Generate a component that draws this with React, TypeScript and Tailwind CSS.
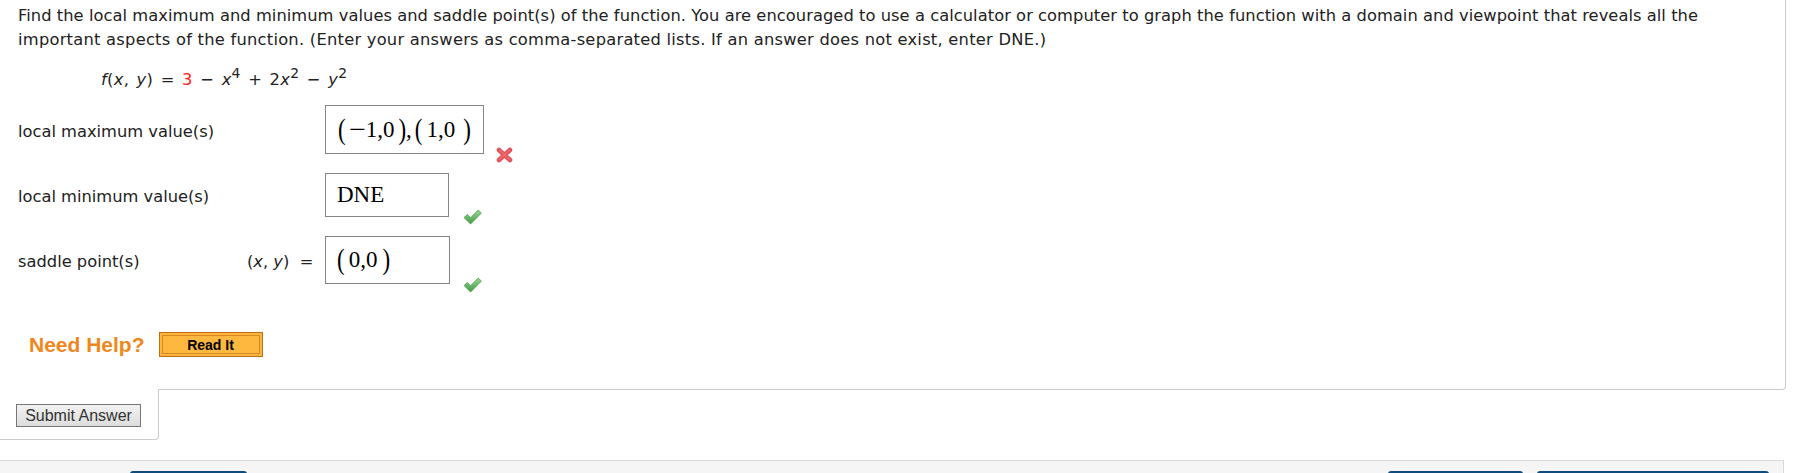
import React from "react";

function Check() {
  return (
    <svg width="19" height="16" viewBox="0 0 19 16" className="block">
      <defs>
        <linearGradient id="gck" x1="0" y1="0" x2="0" y2="1">
          <stop offset="0" stopColor="#9ad894" />
          <stop offset="1" stopColor="#3f9a42" />
        </linearGradient>
      </defs>
      <path d="M1 8.6 L4.3 5.6 L7.6 8.8 L15.2 1 L18.4 4.1 L7.6 15 Z" fill="url(#gck)" stroke="#4f9e4d" strokeWidth="0.8" strokeLinejoin="round" />
    </svg>
  );
}

function Cross() {
  return (
    <svg width="17" height="16" viewBox="0 0 17 16" className="block">
      <g strokeLinecap="round">
        <path d="M3 3 L14 13 M14 3 L3 13" stroke="#e44e55" strokeWidth="4.6" />
        <path d="M3.4 3 L13.6 12.4 M13.6 3 L3.4 12.4" stroke="#f27a80" strokeWidth="1.6" opacity="0.7" />
      </g>
    </svg>
  );
}

const Paren = ({ c }: { c: string }) => (
  <span className="inline-block scale-y-125">{c}</span>
);

const Minus = () => <span className="inline-block scale-x-[1.3] mx-[2px]">−</span>;

export default function App() {
  return (
    <div className="w-[1794px] h-[473px] overflow-hidden bg-white font-['DejaVu_Sans',Verdana,sans-serif] text-[16.3px] leading-[24px] text-[#222]">
      <div className="mr-[8px] border-r border-b border-[#cccccc] rounded-br-[4px] pb-[32px]">
        <p className="pl-[18px] pt-[4px] whitespace-nowrap tracking-[0.05px]">
          Find the local maximum and minimum values and saddle point(s) of the function. You are encouraged to use a calculator or computer to graph the function with a domain and viewpoint that reveals all the
          <br />
          <span className="tracking-[0.25px]">
            important aspects of the function. (Enter your answers as comma-separated lists. If an answer does not exist, enter DNE.)
          </span>
        </p>
        <div className="pl-[101px] mt-[16px] whitespace-nowrap [word-spacing:2px] tracking-[0.3px]">
          <i>f</i>(<i>x</i>, <i>y</i>) = <span className="text-[#ff1a1a]">3</span> − <i>x</i>
          <sup className="text-[85%]">4</sup> + 2<i>x</i>
          <sup className="text-[85%]">2</sup> − <i>y</i>
          <sup className="text-[85%]">2</sup>
        </div>

        {/* row 1 */}
        <div className="flex items-baseline mt-[13px] pl-[18px]">
          <div className="w-[229px]">local maximum value(s)</div>
          <div className="w-[78px]"></div>
          <div className="h-[49px] w-[159px] border border-[#858585] pl-[12px] leading-[47px] font-['Liberation_Serif',serif] text-[23px] text-black whitespace-nowrap">
            <Paren c="(" />
            <span className="ml-[3px]"><Minus /></span>
            <span>1,0</span>
            <span className="ml-[4px]"><Paren c=")" /></span>
            <span>,</span>
            <span className="ml-[3px]"><Paren c="(" /></span>
            <span className="ml-[4px]">1,0</span>
            <span className="ml-[8px]"><Paren c=")" /></span>
          </div>
          <div className="self-end translate-y-[9px] ml-[12px]">
            <Cross />
          </div>
        </div>

        {/* row 2 */}
        <div className="flex items-baseline mt-[19px] pl-[18px]">
          <div className="w-[229px]">local minimum value(s)</div>
          <div className="w-[78px]"></div>
          <div className="h-[44px] w-[124px] border border-[#858585] pl-[11px] leading-[42px] font-['Liberation_Serif',serif] text-[23px] text-black">
            DNE
          </div>
          <div className="self-end translate-y-[8px] ml-[14px]">
            <Check />
          </div>
        </div>

        {/* row 3 */}
        <div className="flex items-baseline mt-[19px] pl-[18px]">
          <div className="w-[229px]">saddle point(s)</div>
          <div className="w-[78px] whitespace-nowrap">
            (<i>x</i>, <i>y</i>)&nbsp;&nbsp;=
          </div>
          <div className="h-[48px] w-[125px] border border-[#858585] pl-[11px] leading-[46px] font-['Liberation_Serif',serif] text-[23px] text-black whitespace-nowrap">
            <Paren c="(" />
            <span className="ml-[4px]">0,0</span>
            <span className="ml-[5px]"><Paren c=")" /></span>
          </div>
          <div className="self-end translate-y-[9px] ml-[13px]">
            <Check />
          </div>
        </div>

        {/* need help */}
        <div className="flex items-center h-[25px] mt-[48px] pl-[29px]">
          <span className="font-['Liberation_Sans',Arial,sans-serif] font-bold text-[21px] leading-[25px] text-[#f0871c]">
            Need Help?
          </span>
          <button className="ml-[14px] h-[25px] w-[104px] border border-[#c0701a] bg-[#ffb43c] p-[2px]">
            <span className="flex h-full w-full items-center justify-center border border-[#d98a22] bg-[#ffb83f] font-['Liberation_Sans',Arial,sans-serif] font-bold text-[14px] leading-none text-black">
              Read It
            </span>
          </button>
        </div>
      </div>

      {/* submit tab */}
      <div className="relative z-10 -mt-px w-[159px] h-[51px] border-r border-b border-[#cccccc] rounded-br-[4px] bg-white pt-[15px] pl-[16px]">
        <button className="h-[23px] w-[125px] border border-[#767676] bg-gradient-to-b from-[#f2f2f2] to-[#dddddd] font-['Liberation_Sans',Arial,sans-serif] text-[16px] leading-[21px] text-[#333]">
          Submit Answer
        </button>
      </div>

      {/* bottom bar */}
      <div className="mt-[20px] mr-[10px] h-[40px] border-t border-r border-[#d9d9d9] bg-[#f5f5f5] pt-[10px] flex">
        <div className="ml-[130px] w-[117px] h-[30px] bg-[#2a66a0] border-t-2 border-[#0f4b7d] rounded-t-[3px]"></div>
        <div className="ml-auto w-[135px] h-[30px] bg-[#2a66a0] border-t-2 border-[#0f4b7d] rounded-t-[3px]"></div>
        <div className="ml-[14px] mr-[14px] w-[232px] h-[30px] bg-[#2a66a0] border-t-2 border-[#0f4b7d] rounded-t-[3px]"></div>
      </div>
    </div>
  );
}
